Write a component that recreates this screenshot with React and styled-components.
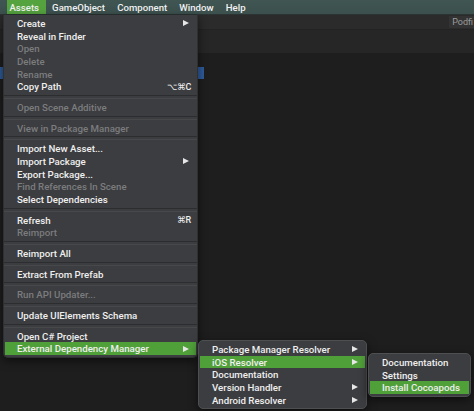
import React from 'react';
import styled, { createGlobalStyle } from 'styled-components';

const GlobalStyle = createGlobalStyle`
  html, body {
    margin: 0;
    padding: 0;
    background: #1e1e1e;
  }
  * {
    box-sizing: border-box;
  }
`;

// editor frame...
const Screen = styled.div`
  position: relative;
  width: 474px;
  height: 411px;
  overflow: hidden;
  display: flex;
  flex-direction: column;
  background: #1e1e1e;
  font-family: Roboto, "Liberation Sans", Arial, sans-serif;
  -webkit-font-smoothing: antialiased;
`;

const MenuBar = styled.div`
  height: 15px;
  flex: none;
  display: flex;
  align-items: stretch;
  padding-left: 7px;
  background: linear-gradient(#42585580, #3c514e), #3e5350;
  border-bottom: 1px solid #2b3433;
`;

const BarItem = styled.div`
  display: flex;
  align-items: center;
  padding: 0 ${({ $right }) => $right ?? 6.1}px 0 ${({ $left }) => $left ?? 6.1}px;
  font-size: 9.6px;
  font-weight: 500;
  color: #f2f2f2;
  background: ${({ $active }) => ($active ? '#55a33f' : 'transparent')};
  white-space: nowrap;
`;

const Toolbar = styled.div`
  height: 15px;
  flex: none;
  display: flex;
  justify-content: flex-end;
  align-items: center;
  background: #2b2b2b;
  border-bottom: 1px solid #232323;
`;

const TabLabel = styled.span`
  font-size: 9px;
  color: #9c9c9c;
  padding: 0 1px 0 3px;
  background: #333;
  line-height: 12px;
`;

const Strip = styled.div`
  height: 23px;
  flex: none;
  background: #262626;
`;

const Workspace = styled.div`
  flex: 1;
  background: #1e1e1e;
  padding-top: 14px;
`;

const Selection = styled.div`
  width: 204px;
  height: 12px;
  background: #2e5c9c;
`;

// menus...
const Dropdown = styled.div`
  position: absolute;
  left: ${({ $left }) => $left}px;
  top: ${({ $top }) => $top}px;
  width: ${({ $width }) => $width}px;
  padding: 2px 1px;
  background: #3c3d40;
  border: 1px solid ${({ $sub }) => ($sub ? '#4e4f51' : '#2f3031')};
  border-top: ${({ $sub }) => ($sub ? '1px solid #4e4f51' : 'none')};
  border-radius: ${({ $sub }) => ($sub ? '5px' : '0 0 5px 5px')};
  box-shadow: 0 3px 10px rgba(0, 0, 0, 0.55);
  z-index: ${({ $z }) => $z || 10};
`;

const Row = styled.div`
  position: relative;
  height: 12.68px;
  display: flex;
  align-items: center;
  padding: 0 4px 0 12px;
  font-size: 9.7px;
  font-weight: 500;
  white-space: nowrap;
  color: ${({ $disabled }) => ($disabled ? '#7b7c7e' : '#efefef')};
  background: ${({ $active }) => ($active ? '#50a03a' : 'transparent')};
`;

const Label = styled.span`
  flex: 1;
`;

const Shortcut = styled.span`
  font-size: 9px;
  letter-spacing: -0.3px;
  padding-right: 1px;
`;

const Arrow = styled.span`
  width: 0;
  height: 0;
  margin-right: 3px;
  border-top: 3.5px solid transparent;
  border-bottom: 3.5px solid transparent;
  border-left: 6px solid ${({ $disabled }) => ($disabled ? '#7b7c7e' : '#e6e6e6')};
`;

const Separator = styled.div`
  height: 8px;
  display: flex;
  align-items: center;
  margin: 0 -1px;
  &::after {
    content: '';
    display: block;
    width: 100%;
    height: 2px;
    border-top: 1px solid #2c2d2f;
    border-bottom: 1px solid #47484a;
  }
`;

const assetsMenu = [
  { label: 'Create', arrow: true },
  { label: 'Reveal in Finder' },
  { label: 'Open', disabled: true },
  { label: 'Delete', disabled: true },
  { label: 'Rename', disabled: true },
  { label: 'Copy Path', shortcut: '⌥⌘C' },
  'sep',
  { label: 'Open Scene Additive', disabled: true },
  'sep',
  { label: 'View in Package Manager', disabled: true },
  'sep',
  { label: 'Import New Asset...' },
  { label: 'Import Package', arrow: true },
  { label: 'Export Package...' },
  { label: 'Find References In Scene', disabled: true },
  { label: 'Select Dependencies' },
  'sep',
  { label: 'Refresh', shortcut: '⌘R' },
  { label: 'Reimport', disabled: true },
  'sep',
  { label: 'Reimport All' },
  'sep',
  { label: 'Extract From Prefab' },
  'sep',
  { label: 'Run API Updater...', disabled: true },
  'sep',
  { label: 'Update UIElements Schema' },
  'sep',
  { label: 'Open C# Project' },
  { label: 'External Dependency Manager', arrow: true, active: true },
];

const edmMenu = [
  { label: 'Package Manager Resolver', arrow: true },
  { label: 'iOS Resolver', arrow: true, active: true },
  { label: 'Documentation' },
  { label: 'Version Handler', arrow: true },
  { label: 'Android Resolver', arrow: true },
];

const iosMenu = [
  { label: 'Documentation' },
  { label: 'Settings' },
  { label: 'Install Cocoapods', active: true },
];

function MenuItems({ items }) {
  return items.map((item, i) =>
    item === 'sep' ? (
      <Separator key={i} />
    ) : (
      <Row key={i} $disabled={item.disabled} $active={item.active}>
        <Label>{item.label}</Label>
        {item.shortcut && <Shortcut>{item.shortcut}</Shortcut>}
        {item.arrow && <Arrow $disabled={item.disabled} />}
      </Row>
    )
  );
}

export default function App() {
  return (
    <>
      <GlobalStyle />
      <Screen>
        <MenuBar>
          <BarItem $active $left={2.5} $right={7}>Assets</BarItem>
          <BarItem>GameObject</BarItem>
          <BarItem>Component</BarItem>
          <BarItem>Window</BarItem>
          <BarItem>Help</BarItem>
        </MenuBar>
        <Toolbar>
          <TabLabel>Podfi</TabLabel>
        </Toolbar>
        <Strip />
        <Workspace>
          <Selection />
        </Workspace>

        <Dropdown $left={3} $top={15} $width={195}>
          <MenuItems items={assetsMenu} />
        </Dropdown>
        <Dropdown $sub $left={198} $top={340} $width={169} $z={11}>
          <MenuItems items={edmMenu} />
        </Dropdown>
        <Dropdown $sub $left={368} $top={353} $width={103} $z={12}>
          <MenuItems items={iosMenu} />
        </Dropdown>
      </Screen>
    </>
  );
}
